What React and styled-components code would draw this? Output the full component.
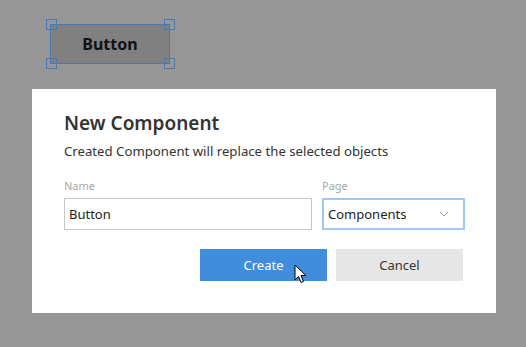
import styled, { createGlobalStyle } from "styled-components";

const Global = createGlobalStyle`
    html, body {
        margin: 0;
        padding: 0;
        background: #969696;
    }
    * { box-sizing: border-box; }
`;

const Canvas = styled.div`
    width: 526px;
    height: 347px;
    position: relative;
    padding: 24px 0 0 32px;
    font-family: "Noto Sans", "Open Sans", sans-serif;
`;

const Selected = styled.div`
    position: relative;
    margin-left: 18px;
    width: 120px;
    height: 40px;
    background: #808080;
    border: 1px solid #4a78b0;
    display: flex;
    align-items: center;
    justify-content: center;
    font-weight: 700;
    font-size: 16px;
    color: #111;
`;

const Handle = styled.span`
    position: absolute;
    width: 11px;
    height: 11px;
    border: 1.5px solid #4a78b0;
    ${(p) => (p.$top ? "top: -6px;" : "bottom: -6px;")}
    ${(p) => (p.$left ? "left: -5px;" : "right: -6px;")}
`;

const Dialog = styled.div`
    margin-top: 25px;
    width: 464px;
    height: 224px;
    background: #fff;
    padding: 21px 33px 0 32px;
    color: #333;
`;

const Title = styled.h2`
    margin: 0;
    font-size: 19px;
    font-weight: 600;
    line-height: 26px;
    color: #333;
`;

const Sub = styled.p`
    margin: 6px 0 0;
    font-size: 13.2px;
    line-height: 18px;
    color: #333;
`;

const Fields = styled.div`
    display: grid;
    grid-template-columns: 248px 143px;
    gap: 10px;
    margin-top: 18px;
`;

const Field = styled.div`
    display: flex;
    flex-direction: column;
`;

const Label = styled.label`
    font-size: 11px;
    line-height: 15px;
    color: #a8a8a8;
    margin-bottom: 5px;
`;

const Input = styled.div`
    height: 32px;
    border: ${(p) => (p.$focus ? "2px solid #9ec8f5" : "1px solid #c8c8c8")};
    display: flex;
    align-items: center;
    justify-content: space-between;
    padding: 0 ${(p) => (p.$focus ? "14px 0 4px" : "4px")};
    font-size: 13px;
    color: #222;
`;

const Actions = styled.div`
    display: flex;
    justify-content: flex-end;
    gap: 9px;
    margin-top: 19px;
`;

const Btn = styled.button`
    position: relative;
    width: 127px;
    height: 32px;
    border: none;
    font-family: inherit;
    font-size: 13px;
    background: ${(p) => (p.$primary ? "#408ddb" : "#e6e6e6")};
    color: ${(p) => (p.$primary ? "#fff" : "#333")};
`;

// mouse pointer resting over the Create button
const Cursor = styled.svg`
    position: absolute;
    left: 94px;
    top: 15px;
`;

const Chevron = () => (
    <svg width="10" height="6" viewBox="0 0 10 6">
        <path d="M1 1 L5 5 L9 1" fill="none" stroke="#999" strokeWidth="1" />
    </svg>
);

const App = () => {
    return (
        <Canvas>
            <Global />
            <Selected>
                Button
                <Handle $top $left />
                <Handle $top />
                <Handle $left />
                <Handle />
            </Selected>
            <Dialog>
                <Title>New Component</Title>
                <Sub>Created Component will replace the selected objects</Sub>
                <Fields>
                    <Field>
                        <Label>Name</Label>
                        <Input>Button</Input>
                    </Field>
                    <Field>
                        <Label>Page</Label>
                        <Input $focus>
                            Components
                            <Chevron />
                        </Input>
                    </Field>
                </Fields>
                <Actions>
                    <Btn $primary>
                        Create
                        <Cursor width="13" height="20" viewBox="0 0 13 20">
                            <path d="M1 1 L1 16 L4.5 12.5 L7 18.5 L9.5 17.5 L7 11.5 L12 11.5 Z" fill="#fff" stroke="#000" strokeWidth="1" strokeLinejoin="round" />
                        </Cursor>
                    </Btn>
                    <Btn>Cancel</Btn>
                </Actions>
            </Dialog>
        </Canvas>
    );
};

export default App;
